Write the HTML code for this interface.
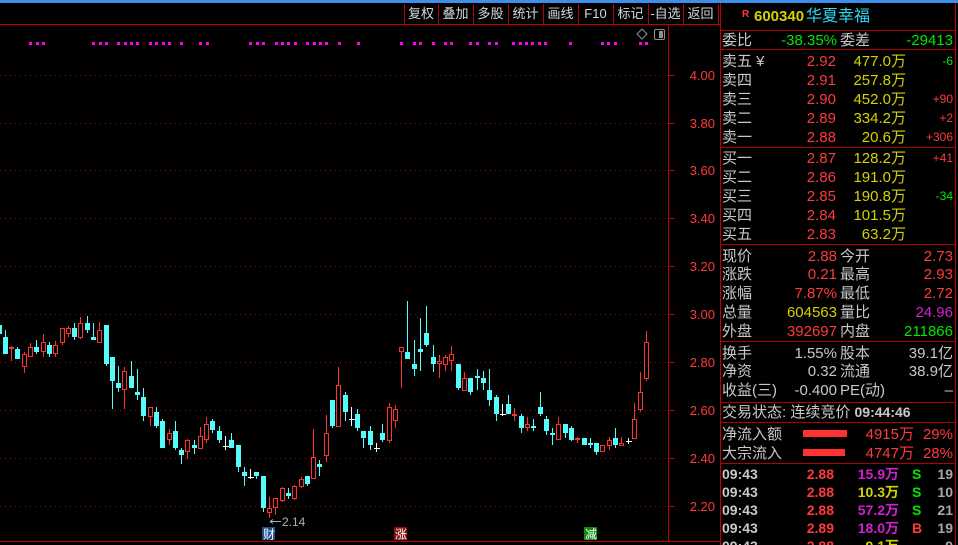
<!DOCTYPE html>
<html style="height:545px;overflow:hidden"><head><meta charset="utf-8"><style>
*{margin:0;padding:0;box-sizing:border-box}
html{height:545px;overflow:hidden}
body{width:958px;height:545px;background:#000;overflow:hidden;position:relative;font-family:"Liberation Sans","Noto Sans CJK SC",sans-serif;font-size:15px;color:#c8c8c8}
.a{position:absolute;white-space:nowrap;line-height:19px;height:19px}
.r{text-align:right}
.tb{position:absolute;top:4px;height:20px;line-height:19px;font-size:13px;color:#d8d8d8;text-align:center}
.red{color:#ff3a3a}.yel{color:#d2d200}.grn{color:#00e800}.mag{color:#d020d0}.gry{color:#a8a8a8}
.hl{position:absolute;left:720px;width:236px;height:1px;background:#b00000}
</style></head><body>
<div style="position:absolute;left:0;top:0;width:958px;height:3px;background:#3c8ee8"></div>
<div style="position:absolute;left:0;top:24px;width:720px;height:1px;background:#c00000"></div>
<div style="position:absolute;left:668px;top:24px;width:1px;height:518px;background:#c00000"></div>
<div style="position:absolute;left:0;top:541px;width:720px;height:1px;background:#c00000"></div>
<div style="position:absolute;left:720px;top:3px;width:1px;height:542px;background:#c00000"></div>
<div style="position:absolute;left:955px;top:3px;width:1px;height:542px;background:#c00000"></div>

<div class="tb" style="left:404px;width:34px">复权</div>
<div class="tb" style="left:438px;width:35px">叠加</div>
<div class="tb" style="left:473px;width:35px">多股</div>
<div class="tb" style="left:508px;width:35px">统计</div>
<div class="tb" style="left:543px;width:35px">画线</div>
<div class="tb" style="left:578px;width:35px">F10</div>
<div class="tb" style="left:613px;width:35px">标记</div>
<div class="tb" style="left:648px;width:35px">-自选</div>
<div class="tb" style="left:683px;width:35px">返回</div>

<svg style="position:absolute;left:0;top:0" width="720" height="545">
<g stroke="#c00000" stroke-width="1">
<path d="M404.5 4V24M438.5 4V24M473.5 4V24M508.5 4V24M543.5 4V24M578.5 4V24M613.5 4V24M648.5 4V24M683.5 4V24M718.5 4V24"/>
</g>
<g stroke="#b00000" stroke-width="1" stroke-dasharray="1 4">
<path d="M0 75.5H668M0 123.5H668M0 170.5H668M0 218.5H668M0 266.5H668M0 314.5H668M0 362.5H668M0 410.5H668M0 458.5H668M0 506.5H668"/>
</g>
<path stroke="#c00000" d="M669 75.5H675M669 123.5H675M669 170.5H675M669 218.5H675M669 266.5H675M669 314.5H675M669 362.5H675M669 410.5H675M669 458.5H675M669 506.5H675"/>
<g fill="#ff3a3a" font-size="13" font-family="Liberation Sans,sans-serif" text-anchor="end">
<text x="715" y="80">4.00</text><text x="715" y="128">3.80</text><text x="715" y="175">3.60</text><text x="715" y="223">3.40</text><text x="715" y="271">3.20</text><text x="715" y="319">3.00</text><text x="715" y="367">2.80</text><text x="715" y="415">2.60</text><text x="715" y="463">2.40</text><text x="715" y="511">2.20</text>
</g>
<g fill="#ff00ff">
<rect x="29" y="42" width="3" height="3"/><rect x="36" y="42" width="3" height="3"/><rect x="42" y="42" width="3" height="3"/>
<rect x="92" y="42" width="3" height="3"/><rect x="99" y="42" width="3" height="3"/><rect x="105" y="42" width="3" height="3"/>
<rect x="117" y="42" width="3" height="3"/><rect x="124" y="42" width="3" height="3"/><rect x="130" y="42" width="3" height="3"/><rect x="136" y="42" width="3" height="3"/>
<rect x="149" y="42" width="3" height="3"/><rect x="155" y="42" width="3" height="3"/><rect x="162" y="42" width="3" height="3"/><rect x="168" y="42" width="3" height="3"/>
<rect x="180" y="42" width="3" height="3"/><rect x="199" y="42" width="3" height="3"/><rect x="206" y="42" width="3" height="3"/>
<rect x="249" y="42" width="3" height="3"/><rect x="256" y="42" width="3" height="3"/><rect x="262" y="42" width="3" height="3"/>
<rect x="275" y="42" width="3" height="3"/><rect x="281" y="42" width="3" height="3"/><rect x="287" y="42" width="3" height="3"/><rect x="294" y="42" width="3" height="3"/>
<rect x="306" y="42" width="3" height="3"/><rect x="313" y="42" width="3" height="3"/><rect x="319" y="42" width="3" height="3"/><rect x="325" y="42" width="3" height="3"/>
<rect x="338" y="42" width="3" height="3"/><rect x="357" y="42" width="3" height="3"/>
<rect x="400" y="42" width="3" height="3"/><rect x="413" y="42" width="3" height="3"/><rect x="419" y="42" width="3" height="3"/><rect x="432" y="42" width="3" height="3"/><rect x="444" y="42" width="3" height="3"/><rect x="450" y="42" width="3" height="3"/><rect x="469" y="42" width="3" height="3"/><rect x="476" y="42" width="3" height="3"/><rect x="488" y="42" width="3" height="3"/><rect x="495" y="42" width="3" height="3"/>
<rect x="512" y="42" width="3" height="3"/><rect x="519" y="42" width="3" height="3"/><rect x="525" y="42" width="3" height="3"/><rect x="531" y="42" width="3" height="3"/><rect x="538" y="42" width="3" height="3"/><rect x="544" y="42" width="3" height="3"/>
<rect x="569" y="42" width="3" height="3"/><rect x="601" y="42" width="3" height="3"/><rect x="607" y="42" width="3" height="3"/><rect x="614" y="42" width="3" height="3"/><rect x="639" y="42" width="3" height="3"/><rect x="645" y="42" width="3" height="3"/>
</g>
<path d="M642 29l5 5-5 5-5-5z" fill="none" stroke="#909090"/>
<rect x="654.5" y="29.5" width="10" height="10" rx="1.5" fill="none" stroke="#909090"/><rect x="659" y="31" width="4" height="7" fill="#909090"/>

<g stroke="#54fcfc" fill="none"><path d="M5.5 330V354M17.5 347V359M36.5 340V354M49.5 342V357M74.5 323V340M87.5 316V333M93.5 323V340M106.5 325V366M112.5 357V409M118.5 366V392M131.5 361V388M137.5 369V400M143.5 388V421M156.5 407V428M162.5 419V448M175.5 421V450M181.5 448V464M194.5 440V454M212.5 419V433M219.5 426V443M231.5 433V448M238.5 445V472M244.5 467V486M256.5 472V479M263.5 476V512M288.5 488V499M307.5 476V486M319.5 460V476M332.5 400V428M345.5 392V421M357.5 409V431M363.5 431V448M370.5 426V450M382.5 424V442M407.5 301V359M414.5 340V376M420.5 318V371M426.5 306V347M433.5 345V372M458.5 364V390M470.5 378V395M477.5 369V390M483.5 371V390M489.5 369V406M496.5 395V421M508.5 395V414M521.5 414V433M533.5 419V431M540.5 392V416M546.5 416V435M552.5 428V445M565.5 424V438M571.5 426V441M590.5 438V448M596.5 443V455M615.5 428V448"/></g>
<g fill="#54fcfc">
<rect x="-3" y="325" width="5" height="9"/><rect x="3" y="337" width="5" height="17"/><rect x="15" y="349" width="5" height="10"/><rect x="34" y="347" width="5" height="5"/><rect x="47" y="345" width="5" height="9"/><rect x="72" y="328" width="5" height="9"/><rect x="85" y="323" width="5" height="7"/><rect x="91" y="337" width="5" height="3"/><rect x="104" y="325" width="5" height="39"/><rect x="110" y="357" width="5" height="24"/><rect x="116" y="383" width="5" height="5"/><rect x="129" y="376" width="5" height="12"/><rect x="135" y="392" width="5" height="3"/><rect x="141" y="397" width="5" height="19"/><rect x="154" y="412" width="5" height="14"/><rect x="160" y="421" width="5" height="27"/><rect x="173" y="431" width="5" height="17"/><rect x="179" y="450" width="5" height="5"/><rect x="192" y="445" width="5" height="3"/><rect x="210" y="421" width="5" height="9"/><rect x="217" y="431" width="5" height="9"/><rect x="229" y="440" width="5" height="8"/><rect x="236" y="445" width="5" height="22"/><rect x="242" y="472" width="5" height="4"/><rect x="254" y="472" width="5" height="4"/><rect x="261" y="476" width="5" height="32"/><rect x="286" y="493" width="5" height="3"/><rect x="305" y="476" width="5" height="8"/><rect x="317" y="464" width="5" height="3"/><rect x="330" y="400" width="5" height="26"/><rect x="343" y="395" width="5" height="17"/><rect x="355" y="414" width="5" height="14"/><rect x="361" y="431" width="5" height="7"/><rect x="368" y="431" width="5" height="14"/><rect x="380" y="433" width="5" height="7"/><rect x="405" y="352" width="5" height="7"/><rect x="412" y="364" width="5" height="5"/><rect x="418" y="349" width="5" height="3"/><rect x="424" y="333" width="5" height="12"/><rect x="431" y="357" width="5" height="7"/><rect x="456" y="364" width="5" height="24"/><rect x="468" y="378" width="5" height="14"/><rect x="475" y="376" width="5" height="2"/><rect x="481" y="378" width="5" height="5"/><rect x="487" y="390" width="5" height="10"/><rect x="494" y="397" width="5" height="17"/><rect x="506" y="404" width="5" height="10"/><rect x="519" y="416" width="5" height="12"/><rect x="531" y="426" width="5" height="2"/><rect x="538" y="407" width="5" height="7"/><rect x="544" y="419" width="5" height="12"/><rect x="550" y="433" width="5" height="2"/><rect x="563" y="424" width="5" height="9"/><rect x="569" y="428" width="5" height="12"/><rect x="582" y="438" width="5" height="7"/><rect x="588" y="443" width="5" height="2"/><rect x="594" y="443" width="5" height="9"/><rect x="613" y="438" width="5" height="7"/>
</g>
<g stroke="#ff3232" fill="none"><path d="M11.5 346V361M24.5 352V373M30.5 343V357M43.5 334V357M55.5 341V357M62.5 328V345M68.5 326V337M80.5 317V339M99.5 322V343M124.5 367V409M150.5 407V426M169.5 429V445M187.5 439V459M200.5 427V449M206.5 417V443M269.5 497V518M275.5 498V515M282.5 487V502M294.5 485V500M301.5 477V488M313.5 429V479M326.5 415V462M338.5 367V427M389.5 403V443M395.5 405V428M401.5 347V388M439.5 355V378M445.5 355V371M451.5 346V371M464.5 372V391M514.5 408V421M527.5 417V431M558.5 417V440M577.5 437V443M602.5 445V452M609.5 437V450M621.5 437V446M634.5 403V439M640.5 372V412M646.5 331V381"/></g>
<g stroke="#ff3232" fill="#000">
<rect x="9.5" y="347.5" width="4" height="1"/><rect x="22.5" y="354.5" width="4" height="12"/><rect x="28.5" y="347.5" width="4" height="9"/><rect x="41.5" y="342.5" width="4" height="9"/><rect x="53.5" y="345.5" width="4" height="8"/><rect x="60.5" y="328.5" width="4" height="14"/><rect x="66.5" y="328.5" width="4" height="5"/><rect x="78.5" y="323.5" width="4" height="14"/><rect x="97.5" y="330.5" width="4" height="12"/><rect x="122.5" y="371.5" width="4" height="18"/><rect x="148.5" y="407.5" width="4" height="9"/><rect x="167.5" y="433.5" width="4" height="6"/><rect x="185.5" y="440.5" width="4" height="11"/><rect x="198.5" y="436.5" width="4" height="12"/><rect x="204.5" y="424.5" width="4" height="15"/><rect x="267.5" y="508.5" width="4" height="4"/><rect x="273.5" y="498.5" width="4" height="9"/><rect x="280.5" y="488.5" width="4" height="12"/><rect x="292.5" y="486.5" width="4" height="12"/><rect x="299.5" y="479.5" width="4" height="7"/><rect x="311.5" y="457.5" width="4" height="21"/><rect x="324.5" y="433.5" width="4" height="22"/><rect x="336.5" y="385.5" width="4" height="41"/><rect x="387.5" y="407.5" width="4" height="33"/><rect x="393.5" y="409.5" width="4" height="11"/><rect x="399.5" y="347.5" width="4" height="4"/><rect x="437.5" y="361.5" width="4" height="2"/><rect x="443.5" y="357.5" width="4" height="7"/><rect x="449.5" y="354.5" width="4" height="6"/><rect x="462.5" y="378.5" width="4" height="12"/><rect x="512.5" y="414.5" width="4" height="1"/><rect x="525.5" y="424.5" width="4" height="3"/><rect x="556.5" y="424.5" width="4" height="15"/><rect x="575.5" y="438.5" width="4" height="1"/><rect x="600.5" y="445.5" width="4" height="6"/><rect x="607.5" y="440.5" width="4" height="5"/><rect x="619.5" y="443.5" width="4" height="2"/><rect x="632.5" y="419.5" width="4" height="19"/><rect x="638.5" y="392.5" width="4" height="17"/><rect x="644.5" y="342.5" width="4" height="36"/>
</g>
<g stroke="#ffffff"><path d="M225.5 436V450M223 446.5H229M250.5 469V479M248 477.5H254M351.5 407V426M349 419.5H355M376.5 443V452M374 448.5H380M502.5 404V416M500 414.5H506M628.5 438V444M626 441.5H632"/></g>
<path d="M270 521.5H281M270 521.5l3-2M270 521.5l3 2" stroke="#b0b0b0" fill="none"/>
<text x="282" y="526" fill="#b0b0b0" font-size="12" font-family="Liberation Sans,sans-serif">2.14</text>
<rect x="262" y="527" width="13" height="13" fill="#1c4f90"/>
<text x="263" y="538.5" fill="#fff" font-size="12" font-family="Noto Sans CJK SC,sans-serif">财</text>
<rect x="394" y="527" width="13" height="13" fill="#8a1010"/>
<text x="395" y="538.5" fill="#fff" font-size="12" font-family="Noto Sans CJK SC,sans-serif">涨</text>
<rect x="584" y="527" width="13" height="13" fill="#108a10"/>
<text x="585" y="538.5" fill="#fff" font-size="12" font-family="Noto Sans CJK SC,sans-serif">减</text>
</svg>

<div class="a red" style="left:742px;top:5px;font-size:10px;font-weight:bold">R</div>
<div class="a yel" style="left:754px;top:7px;font-weight:bold;font-size:15px">600340</div>
<div class="a" style="left:806px;top:7px;color:#30d8f0;font-size:16px">华夏幸福</div>
<div class="hl" style="top:30px"></div>
<div class="a" style="left:722px;top:31px">委比</div><div class="a grn r" style="left:760px;width:77px;top:31px">-38.35%</div>
<div class="a" style="left:840px;top:31px">委差</div><div class="a grn r" style="left:880px;width:73px;top:31px">-29413</div>
<div class="hl" style="top:49px"></div>

<div class="a" style="left:722px;top:52px">卖五 ¥</div><div class="a red r" style="left:780px;width:56px;top:52px">2.92</div><div class="a yel r" style="left:840px;width:66px;top:52px">477.0万</div><div class="a grn r" style="left:910px;width:43px;top:52px;font-size:12px">-6</div>
<div class="a" style="left:722px;top:71px">卖四</div><div class="a red r" style="left:780px;width:56px;top:71px">2.91</div><div class="a yel r" style="left:840px;width:66px;top:71px">257.8万</div>
<div class="a" style="left:722px;top:90px">卖三</div><div class="a red r" style="left:780px;width:56px;top:90px">2.90</div><div class="a yel r" style="left:840px;width:66px;top:90px">452.0万</div><div class="a red r" style="left:910px;width:43px;top:90px;font-size:12px">+90</div>
<div class="a" style="left:722px;top:109px">卖二</div><div class="a red r" style="left:780px;width:56px;top:109px">2.89</div><div class="a yel r" style="left:840px;width:66px;top:109px">334.2万</div><div class="a red r" style="left:910px;width:43px;top:109px;font-size:12px">+2</div>
<div class="a" style="left:722px;top:128px">卖一</div><div class="a red r" style="left:780px;width:56px;top:128px">2.88</div><div class="a yel r" style="left:840px;width:66px;top:128px">20.6万</div><div class="a red r" style="left:910px;width:43px;top:128px;font-size:12px">+306</div>
<div class="hl" style="top:147px"></div>
<div class="a" style="left:722px;top:149px">买一</div><div class="a red r" style="left:780px;width:56px;top:149px">2.87</div><div class="a yel r" style="left:840px;width:66px;top:149px">128.2万</div><div class="a red r" style="left:910px;width:43px;top:149px;font-size:12px">+41</div>
<div class="a" style="left:722px;top:168px">买二</div><div class="a red r" style="left:780px;width:56px;top:168px">2.86</div><div class="a yel r" style="left:840px;width:66px;top:168px">191.0万</div>
<div class="a" style="left:722px;top:187px">买三</div><div class="a red r" style="left:780px;width:56px;top:187px">2.85</div><div class="a yel r" style="left:840px;width:66px;top:187px">190.8万</div><div class="a grn r" style="left:910px;width:43px;top:187px;font-size:12px">-34</div>
<div class="a" style="left:722px;top:206px">买四</div><div class="a red r" style="left:780px;width:56px;top:206px">2.84</div><div class="a yel r" style="left:840px;width:66px;top:206px">101.5万</div>
<div class="a" style="left:722px;top:225px">买五</div><div class="a red r" style="left:780px;width:56px;top:225px">2.83</div><div class="a yel r" style="left:840px;width:66px;top:225px">63.2万</div>
<div class="hl" style="top:244px"></div>

<div class="a" style="left:722px;top:247px">现价</div><div class="a red r" style="left:760px;width:77px;top:247px">2.88</div><div class="a" style="left:840px;top:247px">今开</div><div class="a red r" style="left:880px;width:73px;top:247px">2.73</div>
<div class="a" style="left:722px;top:265px">涨跌</div><div class="a red r" style="left:760px;width:77px;top:265px">0.21</div><div class="a" style="left:840px;top:265px">最高</div><div class="a red r" style="left:880px;width:73px;top:265px">2.93</div>
<div class="a" style="left:722px;top:284px">涨幅</div><div class="a red r" style="left:760px;width:77px;top:284px">7.87%</div><div class="a" style="left:840px;top:284px">最低</div><div class="a red r" style="left:880px;width:73px;top:284px">2.72</div>
<div class="a" style="left:722px;top:303px">总量</div><div class="a yel r" style="left:760px;width:77px;top:303px">604563</div><div class="a" style="left:840px;top:303px">量比</div><div class="a mag r" style="left:880px;width:73px;top:303px">24.96</div>
<div class="a" style="left:722px;top:322px">外盘</div><div class="a red r" style="left:760px;width:77px;top:322px">392697</div><div class="a" style="left:840px;top:322px">内盘</div><div class="a grn r" style="left:880px;width:73px;top:322px">211866</div>
<div class="hl" style="top:341px"></div>
<div class="a" style="left:722px;top:344px">换手</div><div class="a r" style="left:760px;width:77px;top:344px">1.55%</div><div class="a" style="left:840px;top:344px">股本</div><div class="a r" style="left:880px;width:73px;top:344px">39.1亿</div>
<div class="a" style="left:722px;top:362px">净资</div><div class="a r" style="left:760px;width:77px;top:362px">0.32</div><div class="a" style="left:840px;top:362px">流通</div><div class="a r" style="left:880px;width:73px;top:362px">38.9亿</div>
<div class="a" style="left:722px;top:381px">收益(三)</div><div class="a r" style="left:760px;width:77px;top:381px">-0.400</div><div class="a" style="left:840px;top:381px">PE(动)</div><div class="a r" style="left:880px;width:73px;top:381px">–</div>
<div class="hl" style="top:402px"></div>
<div class="a" style="left:722px;top:403px">交易状态: 连续竞价 <span style="font-weight:bold;font-size:14px">09:44:46</span></div>
<div class="hl" style="top:422px"></div>
<div class="a" style="left:722px;top:425px">净流入额</div><div style="position:absolute;left:803px;top:430px;width:44px;height:7px;background:#ff3232"></div><div class="a red r" style="left:850px;width:64px;top:425px">4915万</div><div class="a red r" style="left:910px;width:43px;top:425px">29%</div>
<div class="a" style="left:722px;top:444px">大宗流入</div><div style="position:absolute;left:803px;top:449px;width:42px;height:7px;background:#ff3232"></div><div class="a red r" style="left:850px;width:64px;top:444px">4747万</div><div class="a red r" style="left:910px;width:43px;top:444px">28%</div>
<div class="hl" style="top:463px"></div>
<div style="font-size:14px;font-weight:bold">
<div class="a" style="left:722px;top:465px">09:43</div><div class="a red r" style="left:780px;width:54px;top:465px">2.88</div><div class="a mag r" style="left:840px;width:59px;top:465px">15.9万</div><div class="a grn" style="left:912px;top:465px">S</div><div class="a gry r" style="left:925px;width:28px;top:465px">19</div>
<div class="a" style="left:722px;top:483px">09:43</div><div class="a red r" style="left:780px;width:54px;top:483px">2.88</div><div class="a yel r" style="left:840px;width:59px;top:483px">10.3万</div><div class="a grn" style="left:912px;top:483px">S</div><div class="a gry r" style="left:925px;width:28px;top:483px">10</div>
<div class="a" style="left:722px;top:501px">09:43</div><div class="a red r" style="left:780px;width:54px;top:501px">2.88</div><div class="a mag r" style="left:840px;width:59px;top:501px">57.2万</div><div class="a grn" style="left:912px;top:501px">S</div><div class="a gry r" style="left:925px;width:28px;top:501px">21</div>
<div class="a" style="left:722px;top:519px">09:43</div><div class="a red r" style="left:780px;width:54px;top:519px">2.89</div><div class="a mag r" style="left:840px;width:59px;top:519px">18.0万</div><div class="a red" style="left:912px;top:519px">B</div><div class="a gry r" style="left:925px;width:28px;top:519px">19</div>
<div class="a" style="left:722px;top:537px;height:8px;overflow:hidden">09:43</div><div class="a red r" style="left:780px;width:54px;top:537px;height:8px;overflow:hidden">2.88</div><div class="a yel r" style="left:840px;width:59px;top:537px;height:8px;overflow:hidden">9.1万</div><div class="a gry r" style="left:925px;width:28px;top:537px;height:8px;overflow:hidden">9</div>
</div>
</body></html>
